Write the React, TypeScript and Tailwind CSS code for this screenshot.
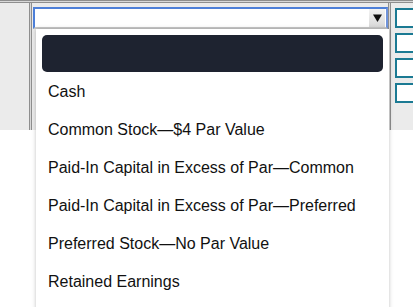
const options = [
  "Cash",
  "Common Stock—$4 Par Value",
  "Paid-In Capital in Excess of Par—Common",
  "Paid-In Capital in Excess of Par—Preferred",
  "Preferred Stock—No Par Value",
  "Retained Earnings",
];

export default function App() {
  return (
    <div className="relative h-[307px] w-[413px] overflow-hidden bg-white font-['Liberation_Sans',Arial,sans-serif]">
      {/* grid background */}
      <div className="flex h-[130px] flex-col bg-[#ebebeb]">
        <div className="h-px bg-[#8e8e8e]" />
        <div className="h-px bg-[#d8d8d8]" />
        <div className="h-px bg-[#8e8e8e]" />
        <div className="flex flex-1">
          <div className="w-[29px] shrink-0" />
          <div className="w-px shrink-0 bg-[#8e8e8e]" />
          <div className="w-px shrink-0 bg-[#d8d8d8]" />
          <div className="w-px shrink-0 bg-[#8e8e8e]" />
          <div className="w-[356px] shrink-0 pt-[4px] pl-px">
            <div className="flex h-[22px] w-[355px] items-stretch border-2 border-[#4d7fd8] border-r-[#6f94dc] border-b-[#c9c9c9] bg-white">
              <div className="flex-1" />
              <div className="mr-px flex w-[16px] items-center justify-center bg-gradient-to-b from-[#f4f4f4] to-[#d9d9d9]">
                <svg width="9" height="8" viewBox="0 0 9 8">
                  <path d="M0 0.5 H9 L4.5 8 Z" fill="#111" />
                </svg>
              </div>
            </div>
          </div>
          <div className="w-px shrink-0 bg-[#8e8e8e]" />
          <div className="w-px shrink-0 bg-[#d8d8d8]" />
          <div className="w-px shrink-0 bg-[#8e8e8e]" />
          <div className="flex min-w-0 flex-1 flex-col gap-[5px] overflow-hidden pt-[5px] pl-[4px]">
            {[0, 1, 2, 3].map((i) => (
              <div key={i} className="h-[20px] w-[24px] shrink-0 border-2 border-r-0 border-[#1b7a93] bg-white" />
            ))}
          </div>
        </div>
      </div>

      {/* open dropdown menu */}
      <div className="absolute top-[29px] left-[36px] h-[290px] w-[353px] bg-white px-[6px] pt-[6px] shadow-[0_0_4px_rgba(0,0,0,0.25)]">
        <div className="h-[37px] rounded-[5px] bg-[#1e2330]" />
        <ul className="text-[16px] text-[#111]">
          {options.map((o) => (
            <li key={o} className="flex h-[38px] items-center pt-[2px] pl-[6px]">
              {o}
            </li>
          ))}
        </ul>
      </div>
    </div>
  );
}
